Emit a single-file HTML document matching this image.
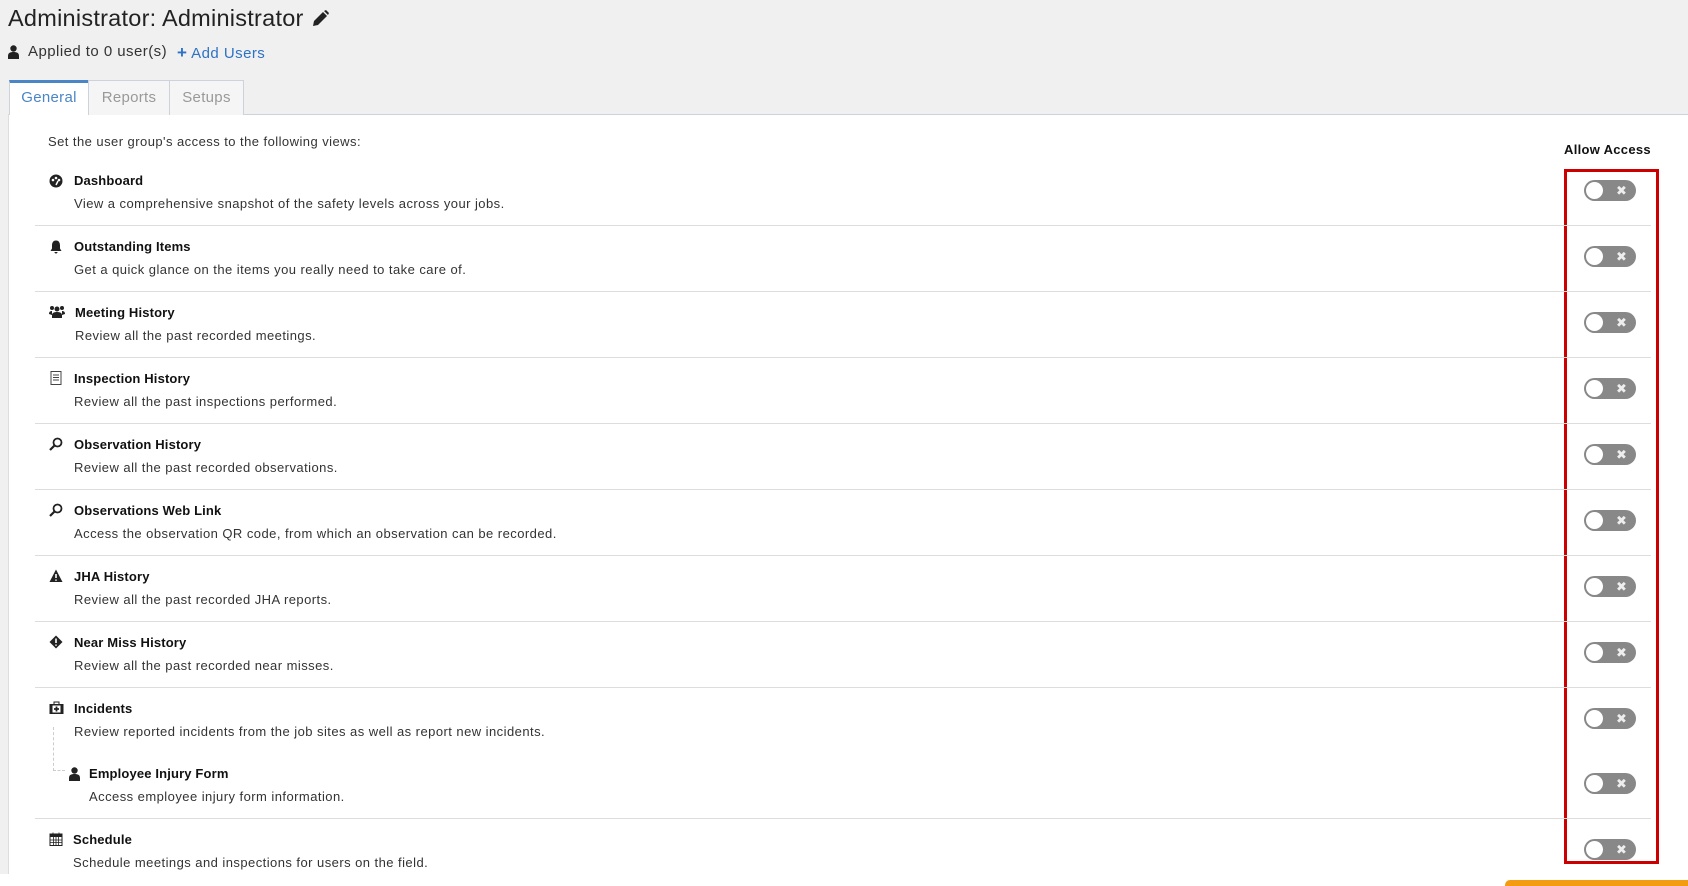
<!DOCTYPE html>
<html><head><meta charset="utf-8"><style>
*{margin:0;padding:0;box-sizing:border-box}
body{width:1688px;height:883px;background:#fff;font-family:"Liberation Sans",sans-serif;position:relative;overflow:hidden;color:#222}
.top{position:absolute;left:0;top:0;width:1688px;height:114px;background:#f0f0f0}
.abs{position:absolute;white-space:nowrap}
.strip{position:absolute;left:0;top:114px;width:9px;height:760px;background:#f0f0f0;border-right:1px solid #ddd}
.tab{position:absolute;top:80px;height:35px;border:1px solid #ccd3dc;border-bottom:none;background:#f5f5f5;color:#999;font-size:15px;text-align:center;line-height:34px;letter-spacing:.3px}
.tab.act{background:#fff;color:#4a86c5;border-top:3px solid #4a86c5;line-height:30px;height:35px}
.t{position:absolute;font-size:13px;font-weight:bold;color:#111;white-space:nowrap;line-height:16px;letter-spacing:.15px}
.d{position:absolute;font-size:13px;color:#333;white-space:nowrap;line-height:16px;letter-spacing:.45px}
.sep{position:absolute;left:35px;width:1616px;height:1px;background:#ddd}
.tg{position:absolute;left:1584px;width:52px;height:21px;border-radius:11px;background:#888}
.tg::before{content:"";position:absolute;left:2px;top:2px;width:17px;height:17px;border-radius:50%;background:#fff}
.tg::after{content:"✖";position:absolute;left:32px;top:1px;font-size:13px;color:#eee;line-height:20px}
.ic{position:absolute;left:49px;width:14px;height:14px}
</style></head><body>
<div class="top"></div>
<div class="abs" style="left:8px;top:5px;font-size:23.5px;color:#222;letter-spacing:.25px">Administrator: Administrator</div>
<svg class="abs" style="left:310px;top:9px" width="20" height="20" viewBox="0 0 20 20"><path d="M3 17l1-5L13 3l4 4-9 9z M14 2l2-1 3 3-1 2z" fill="#222"/></svg>
<svg class="abs" style="left:8px;top:45px" width="11" height="14" viewBox="0 0 11 14"><circle cx="5.5" cy="3.5" r="3.2" fill="#222"/><path d="M0 14v-3c0-3 2-4 5.5-4S11 8 11 11v3z" fill="#222"/></svg>
<div class="abs" style="left:28px;top:43px;font-size:15px;color:#333;letter-spacing:.45px">Applied to 0 user(s)</div>
<div class="abs" style="left:177px;top:43px;font-size:15px;color:#2e72c4;letter-spacing:.45px"><b style="font-size:17px">+</b> Add Users</div>
<div style="position:absolute;left:0;top:114px;width:1688px;height:1px;background:#ccd3dc"></div>
<div class="tab act" style="left:9px;width:80px">General</div>
<div class="tab" style="left:88px;width:82px">Reports</div>
<div class="tab" style="left:169px;width:75px">Setups</div>
<div class="strip"></div>
<div class="d" style="left:48px;top:134px">Set the user group's access to the following views:</div>
<div class="t" style="left:1564px;top:142px;letter-spacing:.3px">Allow Access</div>
<div style="position:absolute;left:1564px;top:169px;width:95px;height:695px;border:3px solid #cc0000"></div>

<svg class="ic" style="top:174px" viewBox="0 0 14 14"><circle cx="7" cy="7" r="6.5" fill="#222"/><circle cx="4" cy="6" r="1.3" fill="#fff"/><circle cx="7" cy="4" r="1.3" fill="#fff"/><circle cx="10" cy="6" r="1.3" fill="#fff"/><path d="M7 11l2-4" stroke="#fff" stroke-width="1.5"/></svg>
<div class="t" style="left:74px;top:173px">Dashboard</div>
<div class="d" style="left:74px;top:196px">View a comprehensive snapshot of the safety levels across your jobs.</div>
<div class="tg" style="top:180px"></div>
<div class="sep" style="top:225px"></div>

<svg class="ic" style="top:240px" viewBox="0 0 14 14"><path d="M7 0.5c-3 0-4 2.5-4 5v3L1.5 11h11L11 8.5v-3c0-2.5-1-5-4-5z M5.5 12a1.5 1.5 0 003 0z" fill="#222"/></svg>
<div class="t" style="left:74px;top:239px">Outstanding Items</div>
<div class="d" style="left:74px;top:262px">Get a quick glance on the items you really need to take care of.</div>
<div class="tg" style="top:246px"></div>
<div class="sep" style="top:291px"></div>

<svg class="ic" style="top:305px;width:16px" viewBox="0 0 16 14"><circle cx="8" cy="4" r="2.5" fill="#222"/><circle cx="3" cy="3" r="2" fill="#222"/><circle cx="13" cy="3" r="2" fill="#222"/><path d="M3 13v-3c0-2 2-3 5-3s5 1 5 3v3z M0 9c0-2 1-3 3-3v4z M16 9c0-2-1-3-3-3v4z" fill="#222"/></svg>
<div class="t" style="left:75px;top:305px">Meeting History</div>
<div class="d" style="left:75px;top:328px">Review all the past recorded meetings.</div>
<div class="tg" style="top:312px"></div>
<div class="sep" style="top:357px"></div>

<svg class="ic" style="top:371px" viewBox="0 0 14 14"><rect x="2" y="0.5" width="10" height="13" fill="#fff" stroke="#444"/><path d="M4 4h6M4 6.5h6M4 9h6" stroke="#444"/></svg>
<div class="t" style="left:74px;top:371px">Inspection History</div>
<div class="d" style="left:74px;top:394px">Review all the past inspections performed.</div>
<div class="tg" style="top:378px"></div>
<div class="sep" style="top:423px"></div>

<svg class="ic" style="top:437px" viewBox="0 0 14 14"><circle cx="8.5" cy="5.5" r="4" fill="none" stroke="#222" stroke-width="1.8"/><path d="M5.5 8.5L1 13" stroke="#222" stroke-width="2.2"/></svg>
<div class="t" style="left:74px;top:437px">Observation History</div>
<div class="d" style="left:74px;top:460px">Review all the past recorded observations.</div>
<div class="tg" style="top:444px"></div>
<div class="sep" style="top:489px"></div>

<svg class="ic" style="top:503px" viewBox="0 0 14 14"><circle cx="8.5" cy="5.5" r="4" fill="none" stroke="#222" stroke-width="1.8"/><path d="M5.5 8.5L1 13" stroke="#222" stroke-width="2.2"/></svg>
<div class="t" style="left:74px;top:503px">Observations Web Link</div>
<div class="d" style="left:74px;top:526px">Access the observation QR code, from which an observation can be recorded.</div>
<div class="tg" style="top:510px"></div>
<div class="sep" style="top:555px"></div>

<svg class="ic" style="top:569px" viewBox="0 0 14 14"><path d="M7 0.5L13.5 13H0.5z" fill="#222"/><path d="M7 5v4M7 10.5v1.3" stroke="#fff" stroke-width="1.6"/></svg>
<div class="t" style="left:74px;top:569px">JHA History</div>
<div class="d" style="left:74px;top:592px">Review all the past recorded JHA reports.</div>
<div class="tg" style="top:576px"></div>
<div class="sep" style="top:621px"></div>

<svg class="ic" style="top:635px" viewBox="0 0 14 14"><path d="M7 0.5L13.5 7 7 13.5 0.5 7z" fill="#222"/><path d="M7 3.5v4.5M7 9.5v1.3" stroke="#fff" stroke-width="1.6"/></svg>
<div class="t" style="left:74px;top:635px">Near Miss History</div>
<div class="d" style="left:74px;top:658px">Review all the past recorded near misses.</div>
<div class="tg" style="top:642px"></div>
<div class="sep" style="top:687px"></div>

<svg class="ic" style="top:701px;width:15px" viewBox="0 0 15 14"><rect x="0.5" y="3" width="14" height="10" fill="#222"/><rect x="5" y="1" width="5" height="2.5" fill="none" stroke="#222"/><rect x="3.5" y="4.5" width="8" height="7" fill="#fff"/><path d="M7.5 5.5v5M5 8h5" stroke="#222" stroke-width="1.8"/></svg>
<div class="t" style="left:74px;top:701px">Incidents</div>
<div class="d" style="left:74px;top:724px">Review reported incidents from the job sites as well as report new incidents.</div>
<div class="tg" style="top:708px"></div>
<div style="position:absolute;left:53px;top:727px;width:12px;height:44px;border-left:1px dashed #ccc;border-bottom:1px dashed #ccc"></div>
<svg class="abs" style="left:69px;top:767px" width="11" height="14" viewBox="0 0 11 14"><circle cx="5.5" cy="3.5" r="3.2" fill="#222"/><path d="M0 14v-3c0-3 2-4 5.5-4S11 8 11 11v3z" fill="#222"/></svg>
<div class="t" style="left:89px;top:766px">Employee Injury Form</div>
<div class="d" style="left:89px;top:789px">Access employee injury form information.</div>
<div class="tg" style="top:773px"></div>
<div class="sep" style="top:818px"></div>

<svg class="ic" style="top:832px" viewBox="0 0 14 14"><rect x="1" y="2" width="12" height="11.5" fill="#fff" stroke="#222"/><rect x="1" y="2" width="12" height="3" fill="#222"/><path d="M4 0.5v3M10 0.5v3M1 8h12M1 10.5h12M4.5 5v8.5M7 5v8.5M9.5 5v8.5" stroke="#222" stroke-width="0.8"/></svg>
<div class="t" style="left:73px;top:832px">Schedule</div>
<div class="d" style="left:73px;top:855px">Schedule meetings and inspections for users on the field.</div>
<div class="tg" style="top:839px"></div>
<div style="position:absolute;left:1505px;top:880px;width:200px;height:6px;background:#f39c12;border-radius:5px 0 0 0"></div>
</body></html>
